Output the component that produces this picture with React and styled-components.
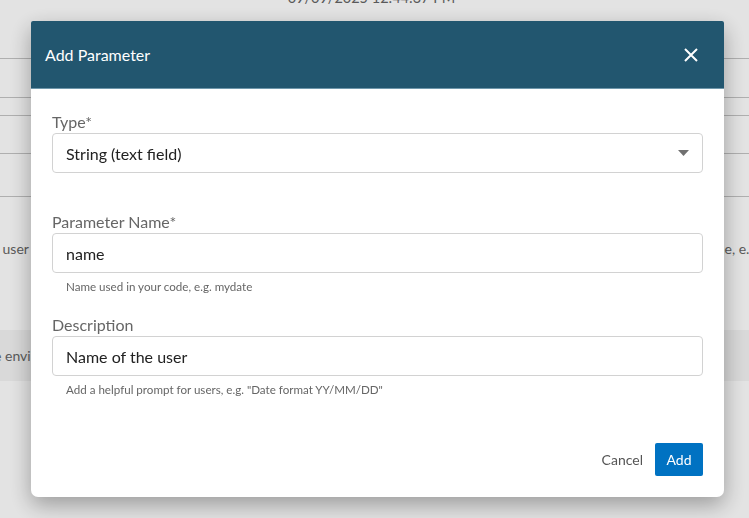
import React from "react";
import styled, { createGlobalStyle } from "styled-components";

const GlobalStyle = createGlobalStyle`
  html, body {
    margin: 0;
    padding: 0;
    width: 100%;
    height: 100%;
    overflow: hidden;
    background: #ffffff;
    font-family: Lato, "Open Sans", sans-serif;
  }
  #root {
    height: 100%;
  }
`;

const Page = styled.div`
  position: relative;
  height: 100%;
  overflow: hidden;
  color: #666;
  font-size: 14px;
`;

const Timestamp = styled.div`
  margin-top: -11px;
  height: 18px;
  line-height: 18px;
  text-align: center;
  font-size: 14.5px;
  color: #666;
  padding-right: 6px;
`;

const TableRow = styled.div`
  height: ${(p) => p.$height}px;
  border-bottom: 1px solid ${(p) => (p.$line ? "#c5c5c5" : "transparent")};
  background: ${(p) => p.$bg || "transparent"};
  display: flex;
  align-items: center;
  justify-content: space-between;
  white-space: nowrap;
  font-size: 14px;
`;

const Cell = styled.span`
  margin-left: ${(p) => p.$offset || 0}px;
  margin-right: ${(p) => p.$right || 0}px;
`;

const BottomLine = styled.div`
  margin-left: 390px;
  width: 298px;
  border-top: 1px solid #c5c5c5;
`;

const Overlay = styled.div`
  position: fixed;
  inset: 0;
  background: rgba(0, 0, 0, 0.11);
  display: flex;
  align-items: flex-start;
  padding: 21px 0 0 31px;
`;

const Dialog = styled.div`
  width: 693px;
  background: #fff;
  border-radius: 2px 2px 7px 7px;
  overflow: hidden;
  box-shadow: 0 8px 22px rgba(0, 0, 0, 0.32);
  display: flex;
  flex-direction: column;
`;

const Header = styled.div`
  height: 68px;
  background: #22566f;
  display: flex;
  align-items: center;
  justify-content: space-between;
  padding: 0 22px 0 14px;
  box-sizing: border-box;
  border-bottom: 1px solid #6f97ab;
`;

const Title = styled.h2`
  margin: 0;
  font-size: 16px;
  font-weight: 400;
  color: #fff;
`;

const CloseButton = styled.button`
  border: none;
  background: none;
  padding: 0;
  width: 22px;
  height: 22px;
  display: flex;
  align-items: center;
  justify-content: center;
  cursor: pointer;
`;

const Body = styled.div`
  padding: 24px 21px 21px;
  display: flex;
  flex-direction: column;
`;

const Field = styled.div`
  display: flex;
  flex-direction: column;
  margin-bottom: ${(p) => p.$spacing}px;
`;

const Label = styled.label`
  font-size: 16px;
  line-height: 18px;
  color: #666;
  margin-bottom: 2px;
`;

const Control = styled.div`
  height: 40px;
  box-sizing: border-box;
  border: 1px solid #d2d2d2;
  border-radius: 4px;
  display: flex;
  align-items: center;
  justify-content: space-between;
  padding: 0 13px 0 13px;
  font-size: 16px;
  color: #222;
`;

const Helper = styled.div`
  margin-top: 7px;
  padding-left: 14px;
  font-size: 11.6px;
  line-height: 14px;
  color: #666;
`;

const Footer = styled.div`
  margin-top: 46px;
  display: flex;
  justify-content: flex-end;
  align-items: center;
  gap: 12px;
`;

const TextButton = styled.button`
  border: none;
  background: none;
  font-family: inherit;
  font-size: 14px;
  color: #555;
  padding: 0;
  cursor: pointer;
`;

const PrimaryButton = styled.button`
  height: 33px;
  width: 48px;
  border: none;
  border-radius: 2px;
  background: #0072c2;
  color: #fff;
  font-family: inherit;
  font-size: 14px;
  cursor: pointer;
`;

const Caret = () => (
  <svg width="11" height="6" viewBox="0 0 11 6">
    <path d="M0 0 H11 L5.5 6 Z" fill="#707070" />
  </svg>
);

const CloseIcon = () => (
  <svg width="14" height="14" viewBox="0 0 14 14">
    <path d="M1 1 L13 13 M13 1 L1 13" stroke="#fff" strokeWidth="2" />
  </svg>
);

export default function App() {
  return (
    <>
      <GlobalStyle />
      <Page>
        <Timestamp>09/09/2025 12:44:37 PM</Timestamp>
        <TableRow $height={51} $line />
        <TableRow $height={38} $line />
        <TableRow $height={17} $line />
        <TableRow $height={37} $line />
        <TableRow $height={42} $line />
        <TableRow $height={103}>
          <Cell $offset={-62}>Values for user parameters</Cell>
          <Cell $right={-60}>Name, e.g. mydate</Cell>
        </TableRow>
        <TableRow $height={28} />
        <TableRow $height={50} $bg="#f4f4f4">
          <Cell $offset={-57}>Set in the environment</Cell>
        </TableRow>
        <TableRow $height={137} />
        <BottomLine />

        <Overlay>
          <Dialog>
            <Header>
              <Title>Add Parameter</Title>
              <CloseButton aria-label="Close">
                <CloseIcon />
              </CloseButton>
            </Header>
            <Body>
              <Field $spacing={40}>
                <Label>Type*</Label>
                <Control>
                  <span>String (text field)</span>
                  <Caret />
                </Control>
              </Field>
              <Field $spacing={22}>
                <Label>Parameter Name*</Label>
                <Control>name</Control>
                <Helper>Name used in your code, e.g. mydate</Helper>
              </Field>
              <Field $spacing={0}>
                <Label>Description</Label>
                <Control>Name of the user</Control>
                <Helper>Add a helpful prompt for users, e.g. "Date format YY/MM/DD"</Helper>
              </Field>
              <Footer>
                <TextButton>Cancel</TextButton>
                <PrimaryButton>Add</PrimaryButton>
              </Footer>
            </Body>
          </Dialog>
        </Overlay>
      </Page>
    </>
  );
}
